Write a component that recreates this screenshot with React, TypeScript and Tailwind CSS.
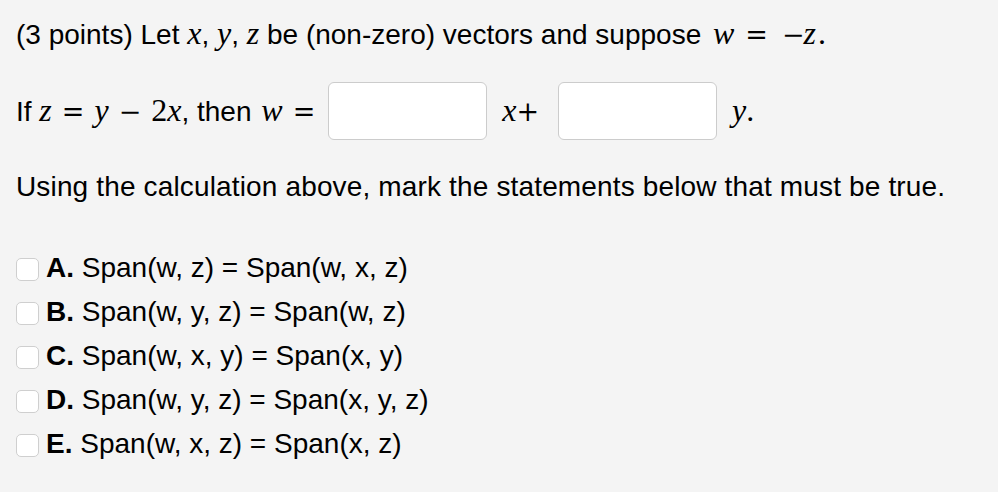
import React from "react";

function M({ children, className = "" }: { children: React.ReactNode; className?: string }) {
  return <span className={`italic text-[32px] font-['Liberation_Serif',serif] ${className}`}>{children}</span>;
}

function N({ children, className = "" }: { children: React.ReactNode; className?: string }) {
  return <span className={`text-[32px] font-['Liberation_Serif',serif] ${className}`}>{children}</span>;
}

// operators drawn in a wider serif to match the math renderer
function Op({ children, className = "" }: { children: React.ReactNode; className?: string }) {
  return <span className={`text-[27px] font-['DejaVu_Serif',serif] ${className}`}>{children}</span>;
}

const options = [
  { key: "A.", text: "Span(w, z) = Span(w, x, z)" },
  { key: "B.", text: "Span(w, y, z) = Span(w, z)" },
  { key: "C.", text: "Span(w, x, y) = Span(x, y)" },
  { key: "D.", text: "Span(w, y, z) = Span(x, y, z)" },
  { key: "E.", text: "Span(w, x, z) = Span(x, z)" },
];

export default function App() {
  return (
    <div className="h-[492px] w-[998px] overflow-hidden bg-[#f4f4f4] px-4 pt-[17px] text-[28px] leading-[32px] text-black font-['Liberation_Sans',Arial,sans-serif]">
      <p className="whitespace-nowrap">
        (3 points) Let <M>x</M>, <M>y</M>, <M>z</M> be (non-zero) vectors and suppose <M className="ml-[4px]">w</M>
        <Op className="ml-[11px] mr-[14px]">=</Op>
        <Op className="-mr-[1px]">−</Op>
        <M>z</M>
        <N className="ml-[2px]">.</N>
      </p>
      <div className="mt-[31px] flex items-center whitespace-nowrap">
        <span>
          If <M>z</M>
          <Op className="mx-[10px]">=</Op>
          <M>y</M>
          <Op className="mx-[10px]">−</Op>
          <N>2</N>
          <M>x</M>, then <M className="ml-[2px]">w</M>
          <Op className="mx-[10px]">=</Op>
        </span>
        <input className="ml-[3px] h-[58px] w-[159px] rounded-[6px] border border-[#cccccc] bg-white" />
        <span className="ml-[15px] mr-[19px]">
          <M>x</M>
          <Op>+</Op>
        </span>
        <input className="h-[58px] w-[159px] rounded-[6px] border border-[#cccccc] bg-white" />
        <span className="ml-[15px]">
          <M>y</M>
          <N>.</N>
        </span>
      </div>
      <p className="mt-[31px] whitespace-nowrap tracking-[0.15px]">Using the calculation above, mark the statements below that must be true.</p>
      <div className="mt-[43px] flex flex-col">
        {options.map((o) => (
          <div key={o.key} className="flex h-[44px] items-center whitespace-nowrap">
            <span className="mr-[7px] h-[23px] w-[23px] shrink-0 translate-y-[1px] rounded-[5px] border border-[#cfcfcf] bg-white" />
            <span className="font-bold">{o.key}</span>
            <span>&nbsp;{o.text}</span>
          </div>
        ))}
      </div>
    </div>
  );
}
